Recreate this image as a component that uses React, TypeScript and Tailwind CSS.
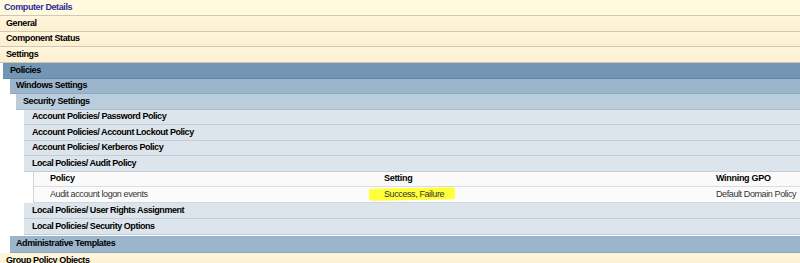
const font = { fontFamily: '"Liberation Sans", Arial, sans-serif' }

function CreamRow({ label, h = 'h-[16px]' }: { label: string; h?: string }) {
  return (
    <div className={`${h} flex items-center pl-[6px] bg-gradient-to-b from-[#fff6dc] to-[#fdefd0] border-b border-[#cfc8b3] text-[9px] font-bold tracking-[-0.4px] text-black`}>
      {label}
    </div>
  )
}

function AccountRow({ label, h = 'h-[16px]' }: { label: string; h?: string }) {
  return (
    <div className={`${h} flex items-center pl-[8px] bg-[#dde5ec] border-b border-[#c3ced8] text-[9px] font-bold tracking-[-0.45px] text-black whitespace-nowrap`}>
      {label}
    </div>
  )
}

function AuditTable() {
  return (
    <div className="ml-[9px] border-l border-[#d2d6da] bg-white">
      <div className="h-[15px] flex items-center bg-[#fafafa] border-b border-[#dcdcdc] text-[9px] font-bold tracking-[-0.3px] text-black whitespace-nowrap">
        <div className="w-[350px] shrink-0 pl-[16px]">Policy</div>
        <div className="w-[332px] shrink-0">Setting</div>
        <div className="shrink-0">Winning GPO</div>
      </div>
      <div className="h-[16px] flex items-center bg-[#fbfbfb] border-b border-[#d0d6dc] text-[9px] tracking-[-0.4px] text-[#333] whitespace-nowrap">
        <div className="w-[350px] shrink-0 pl-[16px]">Audit account logon events</div>
        <div className="w-[332px] shrink-0 h-full flex items-center relative">
          <span className="absolute left-[-15px] top-[1px] w-[86px] h-[12px] bg-[#ffff3a] rounded-[3px] -rotate-1" />
          <span className="relative">Success, Failure</span>
        </div>
        <div className="shrink-0">Default Domain Policy</div>
      </div>
    </div>
  )
}

export default function App() {
  return (
    <div className="w-[800px] h-[263px] overflow-hidden bg-white" style={font}>
      <div className="h-[16px] flex items-center pl-[4px] bg-[#fff9e0] border-b border-[#cfc8b3] text-[9px] font-bold text-[#2f2f9a] tracking-[-0.4px]">
        Computer Details
      </div>
      <CreamRow label="General" />
      <CreamRow label="Component Status" h="h-[15px]" />
      <CreamRow label="Settings" />

      {/* Policies */}
      <div className="ml-[3px]">
        <div className="h-[16px] flex items-center pl-[7px] bg-[#7396b4] border-b border-[#6886a2] text-[9px] font-bold tracking-[-0.4px] text-black">
          Policies
        </div>
        <div className="ml-[7px]">
          <div className="h-[15px] flex items-center pl-[6px] bg-[#9bb5cc] border-b border-[#8fa8be] text-[9px] font-bold tracking-[-0.4px] text-black">
            Windows Settings
          </div>
          <div className="ml-[6px]">
            <div className="h-[16px] flex items-center pl-[7px] bg-[#bacddc] border-b border-[#aabdcd] text-[9px] font-bold tracking-[-0.4px] text-black">
              Security Settings
            </div>
            <div className="ml-[8px]">
              <AccountRow label="Account Policies/ Password Policy" h="h-[15px]" />
              <AccountRow label="Account Policies/ Account Lockout Policy" />
              <AccountRow label="Account Policies/ Kerberos Policy" h="h-[15px]" />
              <AccountRow label="Local Policies/ Audit Policy" />
              <AuditTable />
              <AccountRow label="Local Policies/ User Rights Assignment" />
              <AccountRow label="Local Policies/ Security Options" />
            </div>
          </div>
          <div className="h-[17px] flex items-center pl-[6px] mt-[1px] bg-[#9bb5cc] border-b border-[#8fa8be] text-[9px] font-bold tracking-[-0.4px] text-black">
            Administrative Templates
          </div>
        </div>
      </div>
      <CreamRow label="Group Policy Objects" />
    </div>
  )
}
